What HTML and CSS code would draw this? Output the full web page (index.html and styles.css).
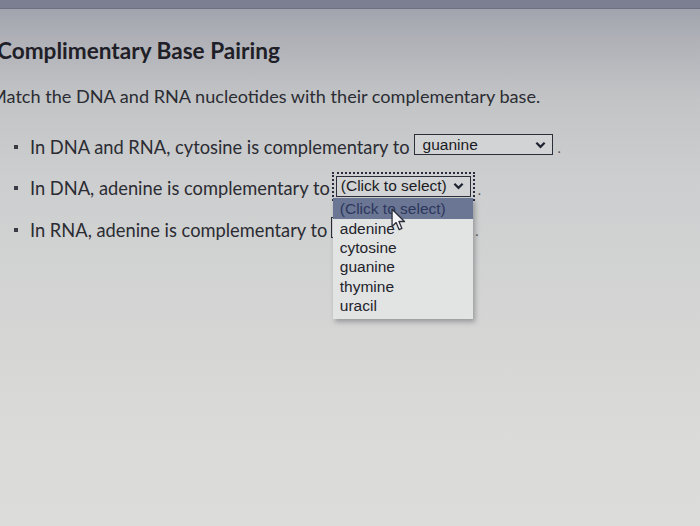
FILE: index.html
```html
<!DOCTYPE html>
<html>
<head>
<meta charset="utf-8">
<link rel="stylesheet" href="styles.css">
</head>
<body>
<div class="topbar"></div>
<main class="content">
  <h2 class="title">Complimentary Base Pairing</h2>
  <p class="intro">Match the DNA and RNA nucleotides with their complementary base.</p>
  <ul class="items">
    <li class="item">
      <span class="bullet"></span>
      <span class="label">In DNA and RNA, cytosine is complementary to</span>
      <span class="select wide"><span class="sel-text">guanine</span><svg class="chev" viewBox="0 0 12 8" width="11" height="8"><path d="M1.5 1.5 L6 6 L10.5 1.5" fill="none" stroke="#1f2230" stroke-width="2.4"/></svg></span>
      <span class="dot">.</span>
    </li>
    <li class="item">
      <span class="bullet"></span>
      <span class="label">In DNA, adenine is complementary to</span>
      <span class="focus">
        <span class="select"><span class="sel-text">(Click to select)</span><svg class="chev" viewBox="0 0 12 8" width="11" height="8"><path d="M1.5 1.5 L6 6 L10.5 1.5" fill="none" stroke="#1f2230" stroke-width="2.4"/></svg></span>
        <span class="dropdown">
          <span class="opt active">(Click to select)</span>
          <span class="opt">adenine</span>
          <span class="opt">cytosine</span>
          <span class="opt">guanine</span>
          <span class="opt">thymine</span>
          <span class="opt">uracil</span>
        </span>
        <svg class="cursor" viewBox="0 0 14 22" width="15" height="24"><path d="M1 1 L1 17 L4.8 13.4 L7.6 20 L10.2 18.9 L7.4 12.4 L12.6 12.4 Z" fill="#f4f4f6" stroke="#2a2d3a" stroke-width="1.2" stroke-linejoin="round"/></svg>
      </span>
      <span class="dot">.</span>
    </li>
    <li class="item">
      <span class="bullet"></span>
      <span class="label">In RNA, adenine is complementary to</span>
      <span class="select wide"><span class="sel-text">(Click to select)</span></span>
      <span class="dot">.</span>
    </li>
  </ul>
</main>
</body>
</html>
```
FILE: styles.css
```css
html, body {
  margin: 0;
  padding: 0;
  height: 100%;
  overflow: hidden;
}
body {
  background: linear-gradient(180deg, #9ea1ab 0px, #afb1b7 40px, #c2c4c6 100px, #cdcecf 180px, #d3d4d3 300px, #dadad8 420px, #dcdcda 526px);
  font-family: Lato, "Open Sans", sans-serif;
  color: #2b2c33;
}
.topbar {
  height: 8px;
  background: #7c7e92;
  border-bottom: 1px solid #6d6f82;
}
.content {
  margin-left: -12px;
}
.title {
  margin: 0;
  padding: 28px 0 0 9px;
  font-size: 22.6px;
  line-height: 28px;
  font-weight: 700;
  color: #1f2027;
}
.intro {
  margin: 0 0 0 2px;
  padding-top: 20px;
  font-size: 18.1px;
  line-height: 22px;
  color: #2b2c33;
}
.items {
  list-style: none;
  margin: 0;
  padding: 27px 0 0 26px;
  display: flex;
  flex-direction: column;
  gap: 20px;
}
.item {
  display: flex;
  align-items: center;
  height: 21.5px;
  font-size: 18.3px;
}
.bullet {
  width: 4px;
  height: 4px;
  background: #3a3b44;
  margin-right: 12px;
  margin-top: 4px;
}
.label {
  margin-right: 4px;
  margin-top: 4px;
}
.select {
  position: relative;
  display: flex;
  align-items: center;
  box-sizing: border-box;
  width: 135px;
  height: 21px;
  flex-shrink: 0;
  border: 1px solid #2c2e3a;
  background: #d2d3d5;
  font-family: "Liberation Sans", Arial, sans-serif;
  font-size: 15.5px;
  color: #1a1b24;
  padding-left: 4px;
}
.select.wide {
  width: 139px;
  padding-left: 8px;
}
.sel-text {
  flex: 1;
  white-space: nowrap;
}
.chev {
  margin-right: 6px;
}
.focus {
  position: relative;
  display: inline-flex;
  padding: 2px;
  outline: 2px dotted #2a2d40;
  outline-offset: 0px;
}
.dot {
  margin-left: 5px;
  margin-top: 6px;
  font-size: 14px;
  color: #555;
}
.dropdown {
  position: absolute;
  left: -1px;
  top: 24px;
  width: 140px;
  display: flex;
  flex-direction: column;
  background: #e2e3e3;
  padding-bottom: 4px;
  box-shadow: 2px 3px 5px rgba(40, 40, 50, 0.35);
  z-index: 5;
  font-family: "Liberation Sans", Arial, sans-serif;
  font-size: 15.5px;
  color: #22232b;
}
.opt {
  height: 19.3px;
  line-height: 19.3px;
  padding-left: 7px;
  white-space: nowrap;
}
.opt.active {
  height: 21px;
  line-height: 21px;
  background: #6b7694;
  color: #2c375c;
}
.cursor {
  position: absolute;
  left: 57px;
  top: 34px;
  z-index: 6;
}
```
